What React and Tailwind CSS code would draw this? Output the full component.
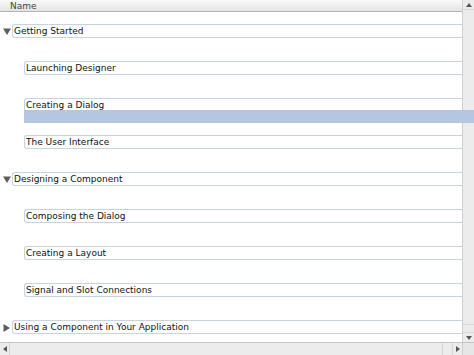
import React from 'react'

const tree = [
  {
    title: 'Getting Started',
    open: true,
    children: ['Launching Designer', 'Creating a Dialog', 'The User Interface'],
  },
  {
    title: 'Designing a Component',
    open: true,
    children: ['Composing the Dialog', 'Creating a Layout', 'Signal and Slot Connections'],
  },
  { title: 'Using a Component in Your Application', open: false, children: [] },
]

const selected = 'Creating a Dialog'

function DownArrow() {
  return (
    <svg width="8" height="7" viewBox="0 0 8 7" className="block">
      <polygon points="0,0.5 8,0.5 4,7" fill="#5e5e5e" />
    </svg>
  )
}

function RightArrow() {
  return (
    <svg width="7" height="8" viewBox="0 0 7 8" className="block">
      <polygon points="0.5,0 7,4 0.5,8" fill="#5e5e5e" />
    </svg>
  )
}

function ItemBox({ label }) {
  return (
    <div className="flex-1 h-[14px] border border-r-0 border-[#c8d3e0] rounded-l-[3px] pl-px leading-[12px] text-[#111] whitespace-nowrap">
      {label}
    </div>
  )
}

function TopRow({ item }) {
  return (
    <div className="h-[37px] shrink-0 pt-[12px] flex items-start">
      <div className="w-[12px] h-[14px] flex items-center pl-[3px] pt-px">
        {item.open ? <DownArrow /> : <RightArrow />}
      </div>
      <ItemBox label={item.title} />
    </div>
  )
}

function ChildRow({ label }) {
  if (label === selected) {
    return (
      <div className="h-[37px] shrink-0 pt-[12px] pl-[24px] flex flex-col">
        <div className="h-[12px] border border-b-0 border-r-0 border-[#c8d3e0] rounded-tl-[3px] pl-px leading-[12px] text-[#111] whitespace-nowrap">
          {label}
        </div>
        <div className="relative z-10 h-[13px] bg-[#b5c7e0] mr-[-12px]"></div>
      </div>
    )
  }
  return (
    <div className="h-[37px] shrink-0 pt-[12px] pl-[24px] flex">
      <ItemBox label={label} />
    </div>
  )
}

export default function App() {
  return (
    <div className="w-[474px] h-[355px] flex flex-col bg-white overflow-hidden font-['DejaVu_Sans',sans-serif] text-[9px]">
      <div className="flex flex-1 min-h-0">
        <div className="flex-1 min-w-0 flex flex-col">
          <div className="h-[12px] shrink-0 border-b border-[#b4b4b4] bg-gradient-to-b from-[#fafafa] to-[#e4e4e4] pl-[10px] leading-[12px] text-[#444]">
            Name
          </div>
          {tree.map((item) => (
            <React.Fragment key={item.title}>
              <TopRow item={item} />
              {item.open && item.children.map((c) => <ChildRow key={c} label={c} />)}
            </React.Fragment>
          ))}
        </div>
        <div className="w-[12px] shrink-0 border-l border-[#cfcfcf] bg-[#ececec] flex flex-col">
          <div className="h-[10px] flex items-center justify-center border-b border-[#d6d6d6]">
            <svg width="6" height="4" viewBox="0 0 6 4"><polygon points="0,4 6,4 3,0" fill="#555" /></svg>
          </div>
          <div className="flex-1"></div>
          <div className="h-[8px] border-t border-[#d6d6d6]"></div>
          <div className="h-[10px] flex items-center justify-center border-t border-[#d6d6d6]">
            <svg width="6" height="4" viewBox="0 0 6 4"><polygon points="0,0 6,0 3,4" fill="#555" /></svg>
          </div>
        </div>
      </div>
      <div className="h-[13px] shrink-0 flex border-t border-[#c6c6c6] bg-[#ececec]">
        <div className="w-[10px] flex items-center justify-center border-r border-[#d6d6d6]">
          <svg width="4" height="6" viewBox="0 0 4 6"><polygon points="4,0 4,6 0,3" fill="#555" /></svg>
        </div>
        <div className="flex-1"></div>
        <div className="w-[10px] border-l border-[#d6d6d6]"></div>
        <div className="w-[10px] flex items-center justify-center border-l border-[#d6d6d6]">
          <svg width="4" height="6" viewBox="0 0 4 6"><polygon points="0,0 4,3 0,6" fill="#555" /></svg>
        </div>
        <div className="w-[12px] border-l border-[#cfcfcf] bg-[#e6e6e6]"></div>
      </div>
    </div>
  )
}
